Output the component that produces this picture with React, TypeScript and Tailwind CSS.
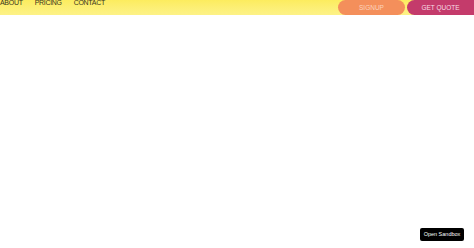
export default function App() {
  return (
    <div className="w-[474px] h-[248px] bg-white overflow-hidden" style={{ fontFamily: '"Liberation Sans", Arial, sans-serif' }}>
      <header className="h-[15px] bg-gradient-to-b from-[#fcec5e] to-[#fdf287] flex items-start justify-between">
        <nav className="flex gap-[12px] text-[7px] leading-[7px] text-[#3a3520] -mt-[1px] tracking-[-0.3px]">
          <span>ABOUT</span>
          <span>PRICING</span>
          <span>CONTACT</span>
        </nav>
        <div className="flex gap-[2px]">
          <button className="w-[67px] h-[15px] rounded-full bg-[#f48f5b] text-[#fcd3bd] text-[6.5px] flex items-center justify-center">SIGNUP</button>
          <button className="w-[67px] h-[15px] rounded-l-full rounded-r-[6px] bg-[#c43b6b] text-[#f7dbe4] text-[6.5px] flex items-center justify-center">GET QUOTE</button>
        </div>
      </header>
      <div className="fixed right-[10px] bottom-[7px] w-[44px] h-[13px] bg-black text-white text-[5.5px] rounded-[2px] flex items-center justify-center whitespace-nowrap">Open Sandbox</div>
    </div>
  );
}
